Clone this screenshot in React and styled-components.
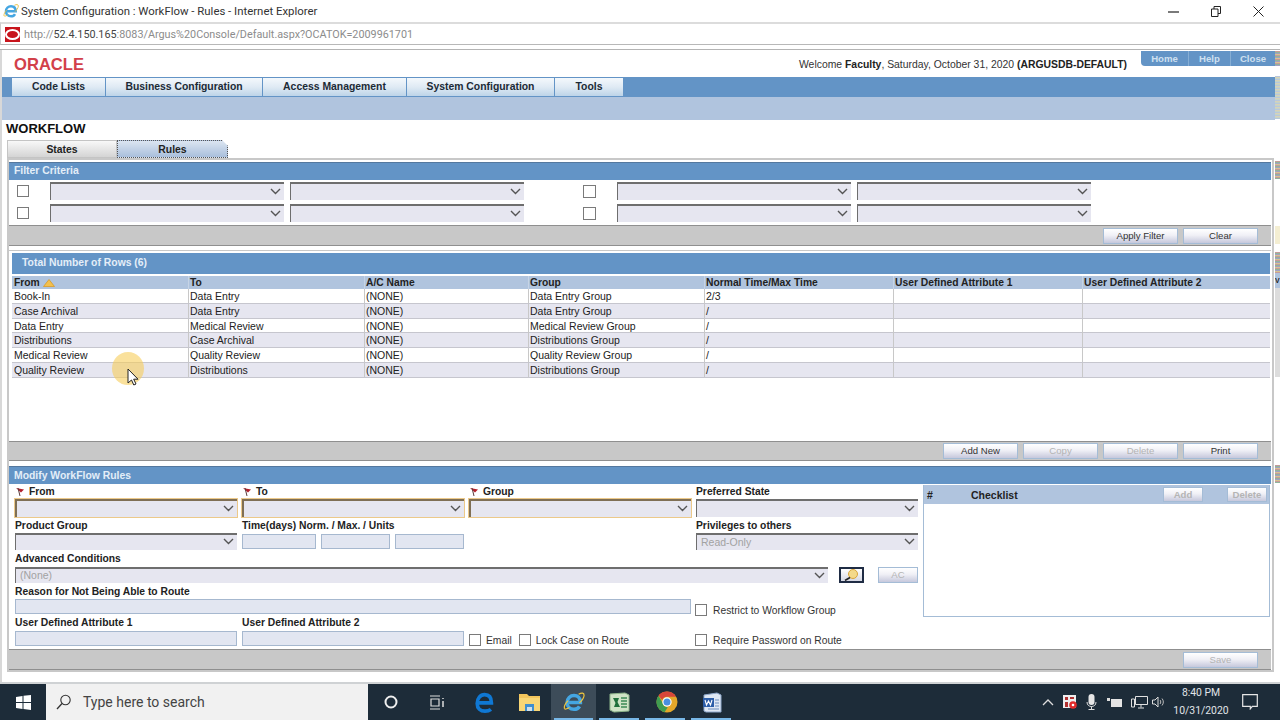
import React from "react";
import styled, { createGlobalStyle } from "styled-components";

const GlobalStyle = createGlobalStyle`
  html, body {
    margin: 0;
    padding: 0;
    background: #fff;
    overflow: hidden;
  }
  * {
    box-sizing: border-box;
  }
`;

const BLUE = "#6394c6";
const LIGHT_BLUE = "#b0c4de";
const LAVENDER = "#e6e6f0";
const GREY = "#c8c8c8";

const Page = styled.div`
  position: relative;
  width: 1280px;
  height: 720px;
  overflow: hidden;
  display: flex;
  flex-direction: column;
  font-family: "Liberation Sans", Arial, sans-serif;
  font-size: 10.5px;
  color: #222;
  background: #fff;
`;

const TitleBar = styled.div`
  height: 22px;
  display: flex;
  align-items: center;
  padding-left: 3px;
  gap: 2px;
  font-family: Roboto, sans-serif;
  font-size: 11.4px;
  color: #333;
`;

const WindowControls = styled.div`
  margin-left: auto;
  display: flex;
  align-items: center;
  gap: 32px;
  padding-right: 16px;
  height: 22px;
`;

const AddressBar = styled.div`
  height: 23px;
  display: flex;
  align-items: center;
  gap: 4px;
  padding-left: 4px;
  border-top: 2px solid #dcdcdc;
  border-bottom: 1px solid #b8b8b8;
  border-left: 1px solid #ccc;
  font-family: Roboto, sans-serif;
  font-size: 10.8px;
  color: #8c8c8c;
  b {
    font-weight: 400;
    color: #444;
  }
`;

const Favicon = styled.span`
  width: 15px;
  height: 15px;
  background: #c8141c;
  display: flex;
  align-items: center;
  justify-content: center;
  &::after {
    content: "";
    width: 11px;
    height: 7px;
    border-radius: 50%;
    border: 2px solid #fff;
  }
`;

const Window = styled.div`
  margin-top: 4px;
  height: 633px;
  display: flex;
  border-top: 1px solid #b4b4b4;
`;

const MainCol = styled.div`
  width: 1275px;
  display: flex;
  flex-direction: column;
  border-left: 2px solid #d8d8d8;
`;

const Strip = styled.div`
  width: 5px;
  display: flex;
  flex-direction: column;
  overflow: hidden;
`;

const stripBg = {
  white: "#fff",
  noisy:
    "repeating-linear-gradient(180deg, #c79a9a 0 1px, #8fb59b 1px 2px, #a3a0c4 2px 3px, #d6c48e 3px 4px)",
  pale: "repeating-linear-gradient(180deg, #b8c8dc 0 1px, #d8d2b8 1px 2px, #c4d4c8 2px 3px)",
  cream: "#f4eed2",
  head: LIGHT_BLUE,
  grey: "#dcdcdc",
};

const StripPart = styled.div`
  height: ${(p) => p.$h}px;
  flex: none;
  background: ${(p) => stripBg[p.$kind]};
  font-size: 7px;
  font-weight: 700;
  line-height: ${(p) => p.$h}px;
  color: #222;
`;

const Header = styled.div`
  height: 27px;
  display: flex;
  padding-left: 12px;
`;

const Logo = styled.div`
  font-weight: 700;
  font-size: 16.6px;
  line-height: 27px;
  margin-top: 1px;
  color: #d2404a;
`;

const Welcome = styled.div`
  margin-left: auto;
  line-height: 29px;
  font-size: 10.4px;
  margin-right: 14px;
  color: #333;
  b {
    color: #222;
  }
`;

const TopLinks = styled.div`
  display: flex;
  width: 134px;
  height: 15px;
  margin-top: 1px;
  background: ${BLUE};
  border-bottom-left-radius: 4px;
`;

const TopLink = styled.span`
  width: ${(p) => p.$w}px;
  text-align: center;
  line-height: 15px;
  font-size: 9.6px;
  font-weight: 700;
  color: #cfe0f0;
  border-right: ${(p) => (p.$last ? "none" : "1px solid #86aed4")};
`;

const Nav = styled.div`
  height: 20px;
  background: ${BLUE};
  display: flex;
  gap: 1px;
  padding: 1px 0 1px 10px;
`;

const NavButton = styled.div`
  width: ${(p) => p.$w}px;
  background: linear-gradient(180deg, #f4f8fc 0%, #dfeaf4 50%, #bdd4e8 100%);
  text-align: center;
  line-height: 17px;
  font-size: 10.4px;
  font-weight: 700;
  color: #1c2a36;
`;

const SubBar = styled.div`
  height: 23px;
  background: ${LIGHT_BLUE};
`;

const PageTitle = styled.div`
  height: 20px;
  padding-left: 4px;
  font-size: 13px;
  line-height: 17px;
  font-weight: 700;
  color: #111;
`;

const Tabs = styled.div`
  height: 18px;
  display: flex;
  margin-left: 5px;
`;

const Tab = styled.div`
  width: ${(p) => p.$w}px;
  text-align: center;
  line-height: 17px;
  font-size: 10.4px;
  font-weight: 700;
  color: #222;
  border: 1px solid #c4c4c4;
  background: linear-gradient(180deg, #f8f8f8 0%, #d4d4d4 100%);
  ${(p) =>
    p.$active &&
    `
    border: 1px dotted #555;
    background: linear-gradient(180deg, #dbe5f1 0%, #a9bfdc 100%);
    clip-path: polygon(0 0, calc(100% - 6px) 0, 100% 6px, 100% 100%, 0 100%);
  `}
`;

const Frame = styled.div`
  margin: 0 1px 0 5px;
  height: 514px;
  border: 2px solid #c8c8c8;
  padding: 2px 1px 0 0;
  display: flex;
  flex-direction: column;
`;

const PanelHeader = styled.div`
  height: 18px;
  flex: none;
  background: ${BLUE};
  padding-left: 5px;
  line-height: ${(p) => p.$line || 17}px;
  font-size: 10.4px;
  font-weight: 700;
  color: #e4eef8;
  border-top: 1px solid #54789e;
`;

const FilterBody = styled.div`
  height: 45px;
  padding: 2px 0 0 8px;
  display: flex;
  flex-direction: column;
  gap: 4px;
`;

const FilterRow = styled.div`
  display: flex;
  gap: 59px;
`;

const FilterGroup = styled.div`
  display: flex;
  gap: 6px;
  align-items: center;
`;

const CheckCell = styled.div`
  width: ${(p) => p.$w}px;
  display: flex;
  align-items: center;
`;

const CheckBox = styled.span`
  display: block;
  flex: none;
  width: ${(p) => p.$size || 12}px;
  height: ${(p) => p.$size || 12}px;
  margin-left: ${(p) => p.$left || 0}px;
  border: 1px solid #7a7a7a;
  background: #fff;
`;

const SelectBox = styled.div`
  flex: ${(p) => (p.$w ? `0 0 ${p.$w}px` : "0 0 auto")};
  height: ${(p) => p.$h || 18}px;
  background: ${LAVENDER};
  display: flex;
  align-items: center;
  justify-content: space-between;
  padding: 0 3px 0 5px;
  color: #a2a2a2;
  box-shadow: ${(p) =>
    p.$required
      ? "inset 2px 2px 0 #7f6f55, 0 0 0 1px #ecc98a"
      : "inset 1px 2px 0 #6e6e6e"};
`;

const Footer = styled.div`
  height: ${(p) => p.$h || 21}px;
  flex: none;
  background: ${GREY};
  border-top: 1px solid #8f8f8f;
  border-bottom: 1px solid #8f8f8f;
  display: flex;
  align-items: center;
  justify-content: flex-end;
  gap: 5px;
  padding-right: 13px;
`;

const Button = styled.div`
  width: ${(p) => p.$w || 75}px;
  height: ${(p) => p.$h || 16}px;
  border: 1px solid #a4bcd6;
  background: linear-gradient(180deg, #fff 0%, #f0f0f6 45%, #c6c8dc 100%);
  text-align: center;
  line-height: ${(p) => (p.$h || 16) - 2}px;
  font-size: 9.6px;
  color: ${(p) => (p.$off ? "#b4b4b4" : "#333")};
`;

const TableArea = styled.div`
  margin-top: 4px;
  height: 191px;
  flex: none;
  border-top: 1px solid #c8c8c8;
  padding: 2px 1px 0 3px;
`;

const TableHead = styled.div`
  height: 21px;
  background: ${BLUE};
  padding-left: 10px;
  line-height: 20px;
  font-size: 10.4px;
  font-weight: 700;
  color: #e4eef8;
  margin-bottom: 2px;
`;

const columns = "176px 176px 164px 176px 189px 189px 188px";

const GridHead = styled.div`
  display: grid;
  grid-template-columns: ${columns};
  height: 13px;
  background: ${LIGHT_BLUE};
  font-size: 10.3px;
  font-weight: 700;
  line-height: 13px;
`;

const HeadCell = styled.div`
  padding-left: ${(p) => (p.$first ? 2 : 1)}px;
  display: flex;
  align-items: center;
  gap: 3px;
  border-left: ${(p) => (p.$first ? "none" : "1px solid #c6d4e6")};
`;

const GridRow = styled.div`
  display: grid;
  grid-template-columns: ${columns};
  height: 14.83px;
  line-height: 14px;
  background: ${(p) => (p.$alt ? LAVENDER : "#fff")};
  border-bottom: 1px solid #c6c6ce;
`;

const Cell = styled.div`
  padding-left: ${(p) => (p.$first ? 2 : 1)}px;
  white-space: nowrap;
  border-left: ${(p) => (p.$first ? "none" : "1px solid #c8c8c8")};
`;

const ModifyPanel = styled.div`
  margin-top: 5px;
  display: flex;
  flex-direction: column;
`;

const ModifyBody = styled.div`
  height: 165px;
  display: flex;
`;

const Form = styled.div`
  width: 909px;
  padding-left: 6px;
  display: grid;
  grid-template-columns: repeat(4, 222px);
  grid-template-rows: 33px 33px 33px 31px 32px;
  column-gap: 5px;
`;

const Field = styled.div`
  display: flex;
  flex-direction: column;
  grid-column: ${(p) => (p.$col ? `${p.$col} / span ${p.$span || 1}` : `span ${p.$span || 1}`)};
`;

const Label = styled.label`
  flex: 1;
  display: flex;
  align-items: center;
  gap: 4px;
  font-size: 10.3px;
  font-weight: 700;
  color: #222;
`;

const Controls = styled.div`
  display: flex;
  flex: none;
  align-items: center;
  height: ${(p) => (p.$h ? `${p.$h}px` : "auto")};
  gap: ${(p) => p.$gap || 0}px;
  margin-left: ${(p) => p.$left || 0}px;
`;

const TextInput = styled.div`
  flex: ${(p) => (p.$w ? `0 0 ${p.$w}px` : "0 0 auto")};
  height: ${(p) => p.$h || 15}px;
  background: #e2e6f1;
  border: 1px solid #a6b8cf;
`;

const SearchButton = styled.div`
  flex: 0 0 25px;
  height: 16px;
  border: 2px solid #1f2c44;
  background: linear-gradient(180deg, #fff 0%, #d6d8e4 100%);
  display: flex;
  align-items: center;
  justify-content: center;
`;

const CheckLine = styled.div`
  align-self: end;
  display: flex;
  align-items: center;
  font-size: 10.3px;
  gap: ${(p) => p.$gap || 6}px;
  margin-left: ${(p) => p.$left || 0}px;
  margin-bottom: ${(p) => p.$bottom || 0}px;
  color: #333;
`;

const Checklist = styled.div`
  margin: 1px 0 0 5px;
  width: 347px;
  height: 132px;
  border: 1px solid #a4bcd6;
  border-top: none;
`;

const ChecklistHead = styled.div`
  height: 19px;
  background: ${LIGHT_BLUE};
  display: flex;
  align-items: center;
  padding-left: 3px;
  font-weight: 700;
  color: #222;
`;

const ChecklistCol = styled.span`
  width: ${(p) => p.$w}px;
`;

const Taskbar = styled.div`
  height: 38px;
  flex: none;
  background: #1d2c39;
  border-top: 2px solid #cfd2d4;
  display: flex;
  color: #e0e4e8;
`;

const StartCell = styled.div`
  width: 46px;
  display: flex;
  align-items: center;
  justify-content: center;
`;

const SearchBox = styled.div`
  width: 322px;
  background: #f1f1f1;
  display: flex;
  align-items: center;
  gap: 11px;
  padding-left: 10px;
  font-family: Roboto, sans-serif;
  font-size: 14px;
  color: #444;
`;

const TaskItem = styled.div`
  width: 45.7px;
  flex: none;
  position: relative;
  display: flex;
  align-items: center;
  justify-content: center;
  padding-left: ${(p) => p.$nudge || 0}px;
  background: ${(p) => (p.$active ? "#3d4c59" : "transparent")};
  ${(p) =>
    p.$open &&
    `
    &::after {
      content: "";
      position: absolute;
      left: 3px;
      right: 3px;
      bottom: 0;
      height: 2px;
      background: #78b8e8;
    }
  `}
`;

const Tray = styled.div`
  margin-left: auto;
  display: flex;
  align-items: center;
  gap: 7px;
  padding-right: 22px;
`;

const TrayIcon = styled.svg`
  flex: none;
  margin-left: ${(p) => p.$left || 0}px;
`;

const Clock = styled.div`
  width: 56px;
  margin-right: 6px;
  text-align: center;
  font-family: Roboto, sans-serif;
  font-size: 10.4px;
  line-height: 18px;
`;

const Halo = styled.div`
  position: absolute;
  left: 112px;
  top: 352px;
  width: 32px;
  height: 33px;
  border-radius: 50%;
  background: rgba(246, 205, 90, 0.6);
`;

const Pointer = styled.svg`
  position: absolute;
  left: 127px;
  top: 368px;
`;

const Chevron = () => (
  <svg width="11" height="7" viewBox="0 0 11 7" style={{ flex: "none" }}>
    <path d="M1 1l4.500 4.500L10 1" fill="none" stroke="#555" strokeWidth="1.400" />
  </svg>
);

const Flag = () => (
  <svg width="10" height="10" viewBox="0 0 10 10">
    <path d="M1 1l8 1.500-3 3z" fill="#b3202c" />
    <path d="M3 1l2 8" stroke="#5a3a3a" strokeWidth="1" />
  </svg>
);

const SortTriangle = () => (
  <svg width="12" height="8" viewBox="0 0 12 8">
    <path d="M6 .5L11.500 7.500H.5z" fill="#f3c04e" stroke="#d99a26" strokeWidth=".8" />
  </svg>
);

const IeIcon = ({ size = 16, ring = "#e9bd3a" }) => (
  <svg width={size} height={size} viewBox="0 0 24 24">
    <path
      d="M6.500 12.500h12.500c0-5-3-7.500-7-7.500s-7.500 3-7.500 7.500 3.200 7.500 7.500 7.500c2.700 0 4.800-1.200 6-3.300"
      fill="none"
      stroke="#45a6e2"
      strokeWidth="3.800"
    />
    <path
      d="M17 3.500c3.500-1.800 6-1.500 6 1 0 3-3 6.500-5 8.500M7 18c-3 1.800-5.200 2.200-5.500 1-.4-2 1.200-5.500 4-8.500"
      fill="none"
      stroke={ring}
      strokeWidth="1.300"
    />
  </svg>
);

const EdgeIcon = () => (
  <svg width="22" height="22" viewBox="0 0 24 24">
    <path
      d="M5 13h14c0-6-3-9-7.500-9S3.500 8 3.500 13.500 7 22 12 22c2.800 0 5-.8 6.500-2"
      fill="none"
      stroke="#0f78d4"
      strokeWidth="4"
    />
  </svg>
);

const FolderIcon = () => (
  <svg width="21" height="18" viewBox="0 0 21 18">
    <path d="M0 1h8l2 2h11v15H0z" fill="#f2c55c" />
    <path d="M0 5h21v13H0z" fill="#f8d675" />
    <path d="M6 11h9v7h-2v-4H8v4H6z" fill="#3f8fd0" />
    <path d="M8 14h5v4H8z" fill="#cfe0ea" />
  </svg>
);

const ExcelIcon = () => (
  <svg width="22" height="21" viewBox="0 0 22 21">
    <path d="M2 2l15-1 4 2v16l-15 1-4-2z" fill="#cfe3c6" stroke="#8db48a" />
    <path d="M5 6h6l-1.500 4L12 15H6l1.500-4z" fill="#20703c" />
    <path d="M13 6h6M13 9h6M13 12h6M13 15h6" stroke="#3d8a55" strokeWidth="1.500" />
  </svg>
);

const ChromeIcon = () => (
  <svg width="22" height="22" viewBox="0 0 22 22">
    <circle cx="11" cy="11" r="10.500" fill="#e3a72a" />
    <path d="M11 .5a10.500 10.500 0 0 1 9.100 5.250H11a5.200 5.200 0 0 0-4.800 3.300L2.500 4.700A10.500 10.500 0 0 1 11 .5z" fill="#d8463a" />
    <path d="M2.500 4.700l4.300 7.600a5 5 0 0 0 5 3.900L8.500 21.200A10.500 10.500 0 0 1 2.500 4.700z" fill="#3f9c50" />
    <circle cx="11" cy="11" r="4.700" fill="#fff" />
    <circle cx="11" cy="11" r="3.500" fill="#4a8fe0" />
  </svg>
);

const WordIcon = () => (
  <svg width="20" height="21" viewBox="0 0 20 21">
    <path d="M2 3l13-2 4 2v17H4l-2-1z" fill="#dfe8f4" stroke="#8ea8cc" />
    <path d="M1 6h11v9H1z" fill="#2d5ea8" />
    <path d="M3 8l1.500 5 2-4 2 4L10 8" fill="none" stroke="#fff" strokeWidth="1.100" />
    <path d="M13 8h4M13 11h4M13 14h4M6 17h11" stroke="#6f8fbd" />
  </svg>
);

const WinLogo = () => (
  <svg width="15" height="15" viewBox="0 0 15 15">
    <path d="M0 2l6.500-1v6H0zM7.500 .8L15 0v7H7.500zM0 8h6.500v6L0 13zM7.500 8H15v7l-7.500-1z" fill="#fff" />
  </svg>
);

const SearchGlass = () => (
  <svg width="16" height="16" viewBox="0 0 16 16">
    <circle cx="9.500" cy="6" r="4.700" fill="none" stroke="#333" strokeWidth="1.100" />
    <path d="M6 9.500L1 15" stroke="#333" strokeWidth="1.300" />
  </svg>
);

const rows = [
  ["Book-In", "Data Entry", "(NONE)", "Data Entry Group", "2/3"],
  ["Case Archival", "Data Entry", "(NONE)", "Data Entry Group", "/"],
  ["Data Entry", "Medical Review", "(NONE)", "Medical Review Group", "/"],
  ["Distributions", "Case Archival", "(NONE)", "Distributions Group", "/"],
  ["Medical Review", "Quality Review", "(NONE)", "Quality Review Group", "/"],
  ["Quality Review", "Distributions", "(NONE)", "Distributions Group", "/"],
];

const headers = [
  "From",
  "To",
  "A/C Name",
  "Group",
  "Normal Time/Max Time",
  "User Defined Attribute 1",
  "User Defined Attribute 2",
];

const stripParts = [
  [1, "white"], [15, "noisy"], [10, "white"], [43, "pale"], [42, "white"],
  [18, "noisy"], [47, "white"], [18, "cream"], [8, "white"], [21, "noisy"],
  [15, "head"], [89, "grey"], [88, "white"], [18, "noisy"], [199, "white"],
];

const FilterPair = ({ w, check }) => (
  <FilterGroup>
    <CheckCell $w={w}>{check}</CheckCell>
    <SelectBox $w={234}><span /><Chevron /></SelectBox>
    <SelectBox $w={234}><span /><Chevron /></SelectBox>
  </FilterGroup>
);

const FilterLine = () => (
  <FilterRow>
    <FilterPair w={27} check={<CheckBox />} />
    <FilterPair w={28} check={<CheckBox $size={13} />} />
  </FilterRow>
);

const App = () => (
  <Page>
    <GlobalStyle />
    <TitleBar>
      <IeIcon />
      System Configuration : WorkFlow - Rules - Internet Explorer
      <WindowControls>
        <svg width="11" height="11" viewBox="0 0 11 11"><path d="M0 6h11" stroke="#222" strokeWidth="1.200" /></svg>
        <svg width="10" height="11" viewBox="0 0 10 11"><path d="M.5 3h6.500v7.500H.5zM3 3V.5h6.500v7H7" fill="none" stroke="#222" /></svg>
        <svg width="11" height="11" viewBox="0 0 11 11"><path d="M.5.5l10 10M10.500.5l-10 10" stroke="#222" /></svg>
      </WindowControls>
    </TitleBar>
    <AddressBar>
      <Favicon />
      <span>http://<b>52.4.150.165</b>:8083/Argus%20Console/Default.aspx?OCATOK=2009961701</span>
    </AddressBar>
    <Window>
      <MainCol>
        <Header>
          <Logo>ORACLE</Logo>
          <Welcome>
            Welcome <b>Faculty</b>, Saturday, October 31, 2020 <b>(ARGUSDB-DEFAULT)</b>
          </Welcome>
          <TopLinks>
            <TopLink $w={48}>Home</TopLink>
            <TopLink $w={42}>Help</TopLink>
            <TopLink $w={44} $last>Close</TopLink>
          </TopLinks>
        </Header>
        <Nav>
          <NavButton $w={93}>Code Lists</NavButton>
          <NavButton $w={156}>Business Configuration</NavButton>
          <NavButton $w={143}>Access Management</NavButton>
          <NavButton $w={147}>System Configuration</NavButton>
          <NavButton $w={68}>Tools</NavButton>
        </Nav>
        <SubBar />
        <PageTitle>WORKFLOW</PageTitle>
        <Tabs>
          <Tab $w={110}>States</Tab>
          <Tab $w={111} $active>Rules</Tab>
        </Tabs>
        <Frame>
          <PanelHeader $line={15}>Filter Criteria</PanelHeader>
          <FilterBody>
            <FilterLine />
            <FilterLine />
          </FilterBody>
          <Footer>
            <Button>Apply Filter</Button>
            <Button>Clear</Button>
          </Footer>

          <TableArea>
            <TableHead>Total Number of Rows (6)</TableHead>
            <GridHead>
              {headers.map((h, i) => (
                <HeadCell key={h} $first={i === 0}>
                  {h}
                  {i === 0 && <SortTriangle />}
                </HeadCell>
              ))}
            </GridHead>
            {rows.map((row, r) => (
              <GridRow key={row[0]} $alt={r % 2 === 1}>
                {row.map((c, i) => (
                  <Cell key={i} $first={i === 0}>{c}</Cell>
                ))}
                <Cell />
                <Cell />
              </GridRow>
            ))}
          </TableArea>
          <Footer $h={20}>
            <Button>Add New</Button>
            <Button $off>Copy</Button>
            <Button $off>Delete</Button>
            <Button>Print</Button>
          </Footer>

          <ModifyPanel>
            <PanelHeader>Modify WorkFlow Rules</PanelHeader>
            <ModifyBody>
              <Form>
                <Field>
                  <Label><Flag />From</Label>
                  <SelectBox $required><span /><Chevron /></SelectBox>
                </Field>
                <Field>
                  <Label><Flag />To</Label>
                  <SelectBox $required><span /><Chevron /></SelectBox>
                </Field>
                <Field>
                  <Label><Flag />Group</Label>
                  <SelectBox $required><span /><Chevron /></SelectBox>
                </Field>
                <Field>
                  <Label>Preferred State</Label>
                  <SelectBox><span /><Chevron /></SelectBox>
                </Field>

                <Field>
                  <Label>Product Group</Label>
                  <SelectBox $h={17}><span /><Chevron /></SelectBox>
                </Field>
                <Field>
                  <Label>Time(days) Norm. / Max. / Units</Label>
                  <Controls $gap={5} $h={17}>
                    <TextInput $w={74} />
                    <TextInput $w={69} />
                    <TextInput $w={69} />
                  </Controls>
                </Field>
                <Field $col={4}>
                  <Label>Privileges to others</Label>
                  <SelectBox $h={17}><span>Read-Only</span><Chevron /></SelectBox>
                </Field>

                <Field $span={4}>
                  <Label>Advanced Conditions</Label>
                  <Controls>
                    <SelectBox $w={813} $h={16}><span>(None)</span><Chevron /></SelectBox>
                    <Controls $left={11} $gap={14}>
                      <SearchButton>
                        <svg width="17" height="12" viewBox="0 0 17 12">
                          <circle cx="10" cy="5" r="4.500" fill="#f4d98a" stroke="#d9a53c" />
                          <path d="M7 8.500L2 11.500" stroke="#222" strokeWidth="1.600" />
                        </svg>
                      </SearchButton>
                      <Button $w={40} $off>AC</Button>
                    </Controls>
                  </Controls>
                </Field>

                <Field $span={3}>
                  <Label>Reason for Not Being Able to Route</Label>
                  <TextInput />
                </Field>
                <CheckLine $left={-1} $bottom={-2}>
                  <CheckBox />
                  Restrict to Workflow Group
                </CheckLine>

                <Field>
                  <Label>User Defined Attribute 1</Label>
                  <TextInput />
                </Field>
                <Field>
                  <Label>User Defined Attribute 2</Label>
                  <TextInput />
                </Field>
                <CheckLine $gap={5}>
                  <CheckBox />
                  Email
                  <CheckBox $left={2} />
                  Lock Case on Route
                </CheckLine>
                <CheckLine $left={-1}>
                  <CheckBox />
                  Require Password on Route
                </CheckLine>
              </Form>
              <Checklist>
                <ChecklistHead>
                  <ChecklistCol $w={44}>#</ChecklistCol>
                  <ChecklistCol $w={192}>Checklist</ChecklistCol>
                  <Controls $gap={24}>
                    <Button $w={40} $h={15} $off>Add</Button>
                    <Button $w={40} $h={15} $off>Delete</Button>
                  </Controls>
                </ChecklistHead>
              </Checklist>
            </ModifyBody>
            <Footer>
              <Button $off>Save</Button>
            </Footer>
          </ModifyPanel>
        </Frame>
      </MainCol>
      <Strip>
        {stripParts.map(([h, kind], i) => (
          <StripPart key={i} $h={h} $kind={kind}>{kind === "head" ? "V" : null}</StripPart>
        ))}
      </Strip>
    </Window>

    <Taskbar>
      <StartCell><WinLogo /></StartCell>
      <SearchBox>
        <SearchGlass />
        Type here to search
      </SearchBox>
      <TaskItem>
        <svg width="14" height="14" viewBox="0 0 14 14"><circle cx="7" cy="7" r="5.500" fill="none" stroke="#eee" strokeWidth="2" /></svg>
      </TaskItem>
      <TaskItem>
        <svg width="16" height="15" viewBox="0 0 16 15"><path d="M1 1h10M1 14h10M2 4h8v7H2z" fill="none" stroke="#ddd" strokeWidth="1.200" /><path d="M14 3v1M14 6v6" stroke="#ddd" strokeWidth="1.500" /></svg>
      </TaskItem>
      <TaskItem $nudge={6}><EdgeIcon /></TaskItem>
      <TaskItem $nudge={4}><FolderIcon /></TaskItem>
      <TaskItem $active $open><IeIcon size={22} ring="#f0c63e" /></TaskItem>
      <TaskItem $open><ExcelIcon /></TaskItem>
      <TaskItem $open $nudge={4}><ChromeIcon /></TaskItem>
      <TaskItem $open $nudge={2}><WordIcon /></TaskItem>
      <Tray>
        <TrayIcon width="12" height="7" viewBox="0 0 12 7"><path d="M1 6l5-5 5 5" fill="none" stroke="#ddd" strokeWidth="1.300" /></TrayIcon>
        <TrayIcon width="14" height="15" viewBox="0 0 14 15" $left={2}>
          <path d="M0 0h13v13H0z" fill="#eee" />
          <path d="M2 2h3v3H2zM7 2h4v2H7zM2 7h3v5H2z" fill="#b03030" />
          <circle cx="10" cy="10" r="3.800" fill="#e02a2a" />
          <circle cx="10" cy="10" r="1.300" fill="#fff" />
        </TrayIcon>
        <TrayIcon width="11" height="17" viewBox="0 0 11 17" $left={2.5}>
          <rect x="2.500" y="0" width="6" height="11" rx="3" fill="#e6e6e6" />
          <path d="M1 8c0 3 2 4.500 4.500 4.500S10 11 10 8M5.500 12.500V15M2.500 15.500h6" fill="none" stroke="#ddd" />
        </TrayIcon>
        <TrayIcon width="17" height="12" viewBox="0 0 17 12" $left={2}>
          <path d="M5 3h11v8H5z" fill="#e4e4e4" />
          <path d="M1 2h3v3H1z" fill="#ddd" />
        </TrayIcon>
        <TrayIcon width="17" height="15" viewBox="0 0 17 15" $left={1}>
          <path d="M4.500 1.500h12v8h-12zM10 9.500v3M7 13h6M.5 4h3v8h-3z" fill="none" stroke="#e0e0e0" />
        </TrayIcon>
        <TrayIcon width="14" height="14" viewBox="0 0 14 14" $left={-3}>
          <path d="M.5 5h2.500l3-3v10l-3-3H.5z" fill="none" stroke="#ddd" />
          <path d="M8 5c1 1.200 1 2.800 0 4M10 3.500c1.800 2 1.800 5 0 7" fill="none" stroke="#bbb" />
        </TrayIcon>
        <Clock>
          <div>8:40 PM</div>
          <div>10/31/2020</div>
        </Clock>
        <TrayIcon width="16" height="16" viewBox="0 0 16 16">
          <path d="M.7.7h14.600v11.600h-5l-2 2.500v-2.500H.7z" fill="none" stroke="#e6e6e6" strokeWidth="1.200" />
        </TrayIcon>
      </Tray>
    </Taskbar>

    <Halo />
    <Pointer width="12" height="18" viewBox="0 0 12 18">
      <path d="M1 1v14l3.500-3 2.300 5 2.200-1-2.300-4.800H11z" fill="#fff" stroke="#222" strokeWidth="1" />
    </Pointer>
  </Page>
);

export default App;
